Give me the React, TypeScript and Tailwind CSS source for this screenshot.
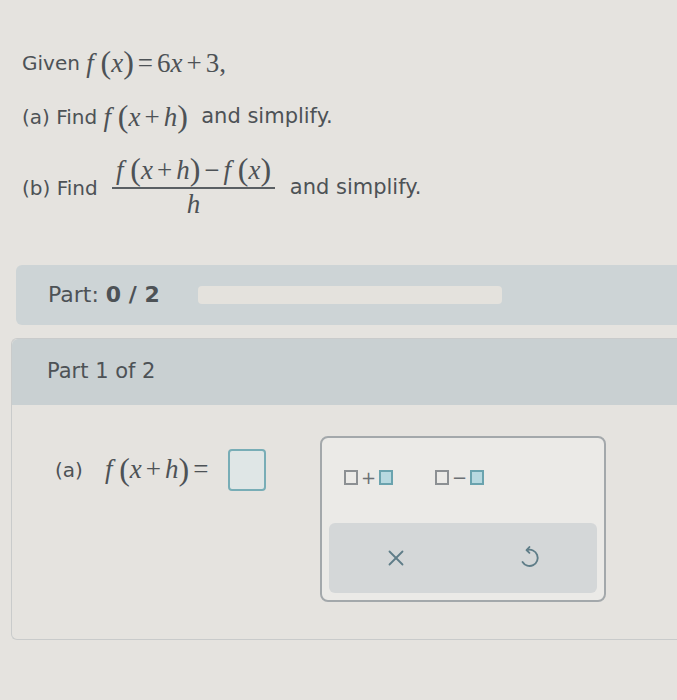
import { X } from 'lucide-react';

const sans = { fontFamily: '"DejaVu Sans", Verdana, sans-serif' };
const serif = { fontFamily: '"Liberation Serif", "Times New Roman", serif' };

function V({ children }: { children: React.ReactNode }) {
  return <span className="italic">{children}</span>;
}

function P({ children }: { children: React.ReactNode }) {
  return <span className="text-[32px] leading-none font-light inline-block -translate-y-[1px]">{children}</span>;
}

function Op({ children }: { children: React.ReactNode }) {
  return <span className="mx-[4px]">{children}</span>;
}

function M({ children, className = '' }: { children: React.ReactNode; className?: string }) {
  return (
    <span className={`text-[27px] leading-none inline-flex items-center ${className}`} style={serif}>
      {children}
    </span>
  );
}

function Box({ filled }: { filled?: boolean }) {
  return (
    <span
      className={`inline-block w-[14px] h-[15px] border-2 ${filled ? 'border-[#6aa3ae] bg-[#b7d9e0]' : 'border-[#8c9093] bg-transparent'}`}
    />
  );
}

function UndoIcon() {
  return (
    <svg width="28" height="28" viewBox="0 0 24 24" fill="none" stroke="#5f7d88" strokeWidth="1.6" strokeLinecap="round" strokeLinejoin="round">
      <path d="M9.5 5.2 A7 7 0 1 1 5.6 15.5" />
      <path d="M11.5 2.6 L9 5.2 L11.5 7.6" />
    </svg>
  );
}

export default function App() {
  return (
    <div className="w-[677px] h-[700px] overflow-hidden bg-[#e5e3df] text-[#4d5256]" style={sans}>
      <div className="pt-[45px] pl-[22px] text-[20px]">
        <div className="flex items-center h-[36px]">
          <span>Given&nbsp;</span>
          <M>
            <V>f</V>&nbsp;<P>(</P><V>x</V><P>)</P><Op>=</Op>6<V>x</V><Op>+</Op>3,
          </M>
        </div>
        <div className="flex items-center h-[36px] mt-[18px]">
          <span>(a) Find&nbsp;</span>
          <M>
            <V>f</V>&nbsp;<P>(</P><V>x</V><Op>+</Op><V>h</V><P>)</P>
          </M>
          <span className="text-[21px]">&nbsp;&nbsp;and simplify.</span>
        </div>
        <div className="flex items-center mt-[20px]">
          <span>(b) Find&nbsp;</span>
          <span className="inline-flex flex-col items-center mx-[8px]">
            <M className="h-[30px] px-[4px]">
              <V>f</V>&nbsp;<P>(</P><V>x</V><Op>+</Op><V>h</V><P>)</P><Op>−</Op><V>f</V>&nbsp;<P>(</P><V>x</V><P>)</P>
            </M>
            <span className="block w-full h-[1.5px] bg-[#5a5f63] mt-[2px]" />
            <M className="h-[32px]">
              <V>h</V>
            </M>
          </span>
          <span className="text-[21px]">&nbsp;and simplify.</span>
        </div>
      </div>

      <div className="ml-[16px] mt-[44px] h-[60px] rounded-l-[6px] bg-[#cdd4d6] flex items-center pl-[32px] text-[22px]">
        <span className="w-[150px]">
          Part: <b className="font-bold">0 / 2</b>
        </span>
        <div className="w-[304px] h-[18px] rounded-[4px] bg-[#e4e2dd]" />
      </div>

      <div className="ml-[11px] mt-[13px] border border-[#c9cbcb] rounded-l-[6px] border-r-0">
        <div className="h-[66px] bg-[#c9d0d2] flex items-center pl-[35px] text-[21px] rounded-tl-[6px]">Part 1 of 2</div>
        <div className="h-[234px] flex items-start">
          <div className="w-[308px] shrink-0 flex items-center pl-[43px] pt-[44px] text-[20px]">
            <span>(a)</span>
            <M className="ml-[22px]">
              <V>f</V>&nbsp;<P>(</P><V>x</V><Op>+</Op><V>h</V><P>)</P><Op>=</Op>
            </M>
            <span className="ml-[16px] w-[38px] h-[42px] rounded-[4px] border-2 border-[#78adb6] bg-[#dfe6e6]" />
          </div>
          <div className="mt-[31px] w-[286px] h-[166px] rounded-[8px] border-2 border-[#a3a8ab] bg-[#ebeae7] p-[7px] flex flex-col">
            <div className="flex items-center h-[78px] pl-[15px] pb-[12px]">
              <span className="flex items-center gap-[3px]">
                <Box />
                <span className="text-[#6c7175] text-[18px] leading-none">+</span>
                <Box filled />
              </span>
              <span className="flex items-center gap-[3px] ml-[42px]">
                <Box />
                <span className="text-[#6c7175] text-[18px] leading-none">−</span>
                <Box filled />
              </span>
            </div>
            <div className="flex-1 rounded-[6px] bg-[#d4d7d8] flex items-center">
              <div className="flex-1 flex justify-center">
                <X size={26} strokeWidth={1.7} color="#5f7d88" />
              </div>
              <div className="flex-1 flex justify-center">
                <UndoIcon />
              </div>
            </div>
          </div>
        </div>
      </div>
    </div>
  );
}
